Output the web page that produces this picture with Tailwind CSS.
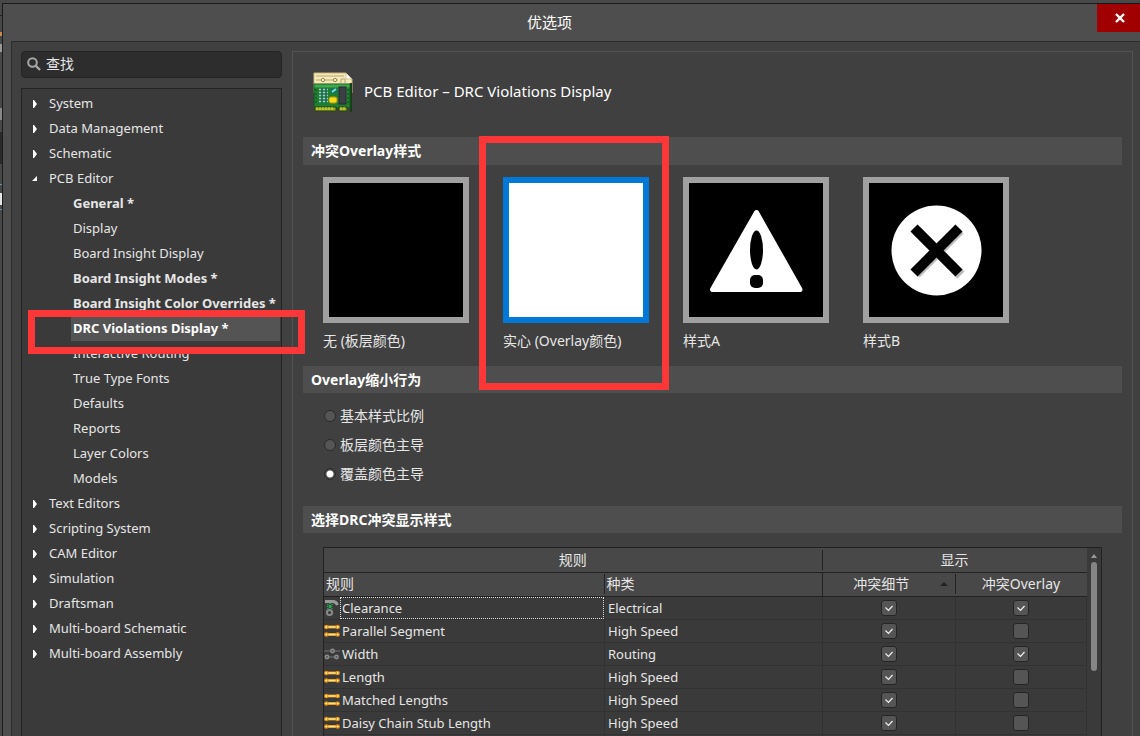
<!DOCTYPE html>
<html lang="zh-CN">
<head>
<meta charset="utf-8">
<meta name="viewport" content="width=device-width, initial-scale=1">
<title>优选项</title>
<script src="https://cdn.jsdelivr.net/npm/@tailwindcss/browser@4"></script>
</head>
<body class="flex h-screen flex-col overflow-hidden bg-[#484848] font-['Noto_Sans','Noto_Sans_CJK_SC',sans-serif] text-[13px] text-[#e6e6e6]">
<svg class="hidden" aria-hidden="true">
  <symbol id="arrow" viewBox="0 0 4 8"><path d="M0 0h1l3 4-3 4H0z" fill="#fff"/></symbol>
  <symbol id="tick" viewBox="0 0 16 16"><path d="M4.500 7.500l3 3 4-4.500" fill="none" stroke="#f0f0f0" stroke-width="1.200"/></symbol>
  <symbol id="segments" viewBox="0 0 16 14">
    <path d="M2.500 3h11M2.500 10.500h11" stroke="#e08a10" stroke-width="2.800"/>
    <path d="M2.500 3h11M2.500 10.500h11" stroke="#ffe98a" stroke-width="1.300"/>
    <g fill="#fff89a" stroke="#e88a10" stroke-width="1.200"><circle cx="2.300" cy="3" r="1.600"/><circle cx="13.700" cy="3" r="1.600"/><circle cx="2.300" cy="10.500" r="1.600"/><circle cx="13.700" cy="10.500" r="1.600"/></g>
  </symbol>
</svg>
<div class="h-[3px] shrink-0"></div>
<div class="flex min-h-0 flex-1">
  <div class="flex w-[2px] shrink-0 flex-col" aria-hidden="true">
    <div class="mt-3 h-px bg-[#222]"></div><div class="mt-4 h-1 bg-[#c88a50]"></div><div class="mt-2 h-2 bg-[#999]"></div><div class="mt-14 h-3 bg-[#888]"></div><div class="mt-3 h-8 bg-[#2a2a2a]"></div><div class="mt-5 h-px bg-[#6a93b8]"></div><div class="mt-2 h-3 bg-[#e6e6e6]"></div><div class="mt-1 h-px bg-[#6a93b8]"></div>
  </div>
  <main class="flex min-w-0 flex-1 flex-col border-t border-l border-[#1b1b1b] bg-[#4e4e4e]">
    <header class="relative flex h-[37px] shrink-0 items-center justify-center">
      <h1 class="pr-11 text-[15px] text-white">优选项</h1>
      <button aria-label="关闭" class="absolute top-0 right-0 flex h-7 w-[43px] items-center justify-center bg-[#a00000] pl-[2px]">
        <svg class="size-[10px]" viewBox="0 0 10 10"><path d="M1 1l8 8M9 1l-8 8" stroke="#fff" stroke-width="2.400"/></svg>
      </button>
    </header>
    <div class="ml-2 flex min-h-0 flex-1 gap-[10px] border-t border-l border-[#2d2d2d] bg-[#404040] pt-[9px] pr-[7px] pl-[9px]">
      <aside class="flex w-[261px] shrink-0 flex-col gap-[10px]">
        <label class="flex h-[27px] shrink-0 items-center gap-[5px] rounded border border-[#242424] bg-[#2d2d2d] px-[5px] pb-[2px]">
          <svg class="size-[14px] shrink-0" viewBox="0 0 14 14"><circle cx="5.500" cy="5.500" r="4.300" fill="none" stroke="#a6a6a6" stroke-width="2"/><path d="M8.500 8.500l4.500 4.500" stroke="#a6a6a6" stroke-width="2.400"/></svg>
          <input type="text" placeholder="查找" aria-label="查找" class="min-w-0 flex-1 bg-transparent text-sm outline-none placeholder:text-[#e6e6e6]">
        </label>
        <nav class="min-h-0 flex-1 border border-b-0 border-[#242424] bg-[#3a3a3a] pt-[2px] [&_a]:block [&_a]:h-[25px] [&_a]:leading-[25px] [&_a]:whitespace-nowrap">
          <ul class="[&>li>div]:flex [&>li>div]:items-center [&>li>div]:gap-3 [&>li>div]:pl-[11px]">
            <li><div><svg class="h-2 w-1"><use href="#arrow"/></svg><a href="#">System</a></div></li>
            <li><div><svg class="h-2 w-1"><use href="#arrow"/></svg><a href="#">Data Management</a></div></li>
            <li><div><svg class="h-2 w-1"><use href="#arrow"/></svg><a href="#">Schematic</a></div></li>
            <li><div><svg class="-ml-px h-[5px] w-[5px]" viewBox="0 0 5 5"><path d="M5 0v5H0z" fill="#fff"/></svg><a href="#">PCB Editor</a></div>
              <ul class="pl-[49px] [&_a]:pl-[2px]">
                <li class="font-bold"><a href="#">General *</a></li>
                <li><a href="#">Display</a></li>
                <li><a href="#">Board Insight Display</a></li>
                <li class="font-bold"><a href="#">Board Insight Modes *</a></li>
                <li class="mr-[2px] overflow-hidden font-bold"><a href="#">Board Insight Color Overrides *</a></li>
                <li class="relative font-bold text-white"><a href="#" aria-current="page" class="mr-px bg-[#545454]">DRC Violations Display *</a>
                  <div class="pointer-events-none absolute -top-[6px] -left-[43px] z-10 h-11 w-[277px] border-[7px] border-[#fd3737]"></div></li>
                <li><a href="#">Interactive Routing</a></li>
                <li><a href="#">True Type Fonts</a></li>
                <li><a href="#">Defaults</a></li>
                <li><a href="#">Reports</a></li>
                <li><a href="#">Layer Colors</a></li>
                <li><a href="#">Models</a></li>
              </ul></li>
            <li><div><svg class="h-2 w-1"><use href="#arrow"/></svg><a href="#">Text Editors</a></div></li>
            <li><div><svg class="h-2 w-1"><use href="#arrow"/></svg><a href="#">Scripting System</a></div></li>
            <li><div><svg class="h-2 w-1"><use href="#arrow"/></svg><a href="#">CAM Editor</a></div></li>
            <li><div><svg class="h-2 w-1"><use href="#arrow"/></svg><a href="#">Simulation</a></div></li>
            <li><div><svg class="h-2 w-1"><use href="#arrow"/></svg><a href="#">Draftsman</a></div></li>
            <li><div><svg class="h-2 w-1"><use href="#arrow"/></svg><a href="#">Multi-board Schematic</a></div></li>
            <li><div><svg class="h-2 w-1"><use href="#arrow"/></svg><a href="#">Multi-board Assembly</a></div></li>
          </ul>
        </nav>
      </aside>
      <section class="min-w-0 flex-1 overflow-hidden border border-b-0 border-[#535353] px-[10px]">
        <div class="flex h-[85px] items-center gap-[10px] pb-[6px] pl-[9px]">
          <svg class="size-[42px]" viewBox="0 0 42 42">
            <path d="M2 2h32l6 6v14H2z" fill="#f6e9b5" stroke="#c9b67c"/>
            <path d="M34 2v6h6z" fill="#fff" stroke="#b5a36c" stroke-width=".6"/>
            <path d="M4 5h28M4 9h5M13 9h9M29 12V8h4v4M24 9h2" fill="none" stroke="#b5a578"/>
            <circle cx="11" cy="9" r="1.700" fill="none" stroke="#9d8c61"/><circle cx="23" cy="9" r="1.700" fill="none" stroke="#9d8c61"/>
            <path d="M38 12h2v29h-2z" fill="#173d12"/>
            <path d="M2 13h36v24H2z" fill="#1f7e31" stroke="#155321"/>
            <path d="M2.500 13.500h35v3h-35z" fill="#41a84c"/>
            <path d="M3 36h21v4H3zM27 36h8v4h-8z" fill="#9aab20" stroke="#26430e"/>
            <path d="M5 36v3M8 36v3M11 36v3M14 36v3M17 36v3M20 36v3M29 36v3M32 36v3" stroke="#d4d94b"/>
            <path d="M4 18v14M36 18v14" stroke="#104e22" stroke-dasharray="2 2"/>
            <path d="M7 18.500h9M7 21.500h9M7 24.500h9M7 27.500h9M7 30.500h9" stroke="#a3cfc4" stroke-width="1.300"/>
            <path d="M10 17v15M14 17v15" stroke="#0c6058" stroke-width="1.500"/>
            <path d="M19 17h6v5h-6z" fill="#087766"/><path d="M20 21l4-3" stroke="#86dfcc" stroke-width="2"/>
            <rect x="17" y="26" width="8" height="6" rx="2" fill="#f4dc19" stroke="#b59a08"/>
            <path d="M26 18h9M26 21h9M26 24h9M26 27h9M26 30h9" stroke="#75a373"/>
            <rect x="27" y="16" width="7" height="17" fill="#3b4046" stroke="#262a2d"/>
          </svg>
          <h2 class="text-[15px] text-white">PCB Editor – DRC Violations Display</h2>
        </div>
        <div class="relative">
          <h3 class="flex h-7 items-center bg-[#4e4e4e] px-2 text-sm font-bold text-white">冲突Overlay样式</h3>
          <div class="flex gap-[34px] pt-3 pl-5 text-sm leading-5 [&>button]:flex [&>button]:w-[146px] [&>button]:flex-col [&>button]:items-start [&>button]:gap-2 [&>button]:whitespace-nowrap">
            <button><span class="block size-[146px] border-[6px] border-[#a0a0a0] bg-black"></span>无 (板层颜色)</button>
            <button aria-pressed="true"><span class="block size-[146px] border-[6px] border-[#0078d7] bg-white"></span>实心 (Overlay颜色)</button>
            <button><svg class="size-[146px] border-[6px] border-[#a0a0a0] bg-black" viewBox="0 0 134 134">
              <path d="M67.500 29.500L23.500 106.500h87.500z" fill="#fff" stroke="#fff" stroke-width="5" stroke-linejoin="round"/>
              <ellipse cx="67.500" cy="67" rx="6.500" ry="19.500"/><rect x="61" y="92" width="13" height="13" rx="5"/></svg>样式A</button>
            <button><svg class="size-[146px] border-[6px] border-[#a0a0a0] bg-black" viewBox="0 0 134 134">
              <circle cx="67.500" cy="67.500" r="45" fill="#fff"/>
              <path d="M47 47l45 45M91 47L47 91" stroke="#bbb" stroke-width="10"/>
              <path d="M45 45l45 45M90 45L45 90" stroke="#000" stroke-width="10"/></svg>样式B</button>
          </div>
          <div class="pointer-events-none absolute -top-px left-[176px] z-10 h-[254px] w-[190px] border-[7px] border-[#fd3737]"></div>
        </div>
        <h3 class="mt-[15px] flex h-[27px] items-center bg-[#4e4e4e] px-2 pt-px text-sm font-bold text-white">Overlay缩小行为</h3>
        <div class="flex flex-col gap-2 pt-3 pb-[22px] pl-[21px] text-sm leading-5 [&_input]:m-0 [&_input]:size-3 [&_input]:appearance-none [&_input]:rounded-full [&_input]:border [&_input]:border-[#2a2a2a] [&_input]:bg-[#555] [&_input]:checked:bg-[radial-gradient(circle,#fff_0_3px,#4a4a4a_4px)] [&_label]:flex [&_label]:h-[21px] [&_label]:items-center [&_label]:gap-1">
          <label><input type="radio" name="zoom">基本样式比例</label>
          <label><input type="radio" name="zoom">板层颜色主导</label>
          <label><input type="radio" name="zoom" checked>覆盖颜色主导</label>
        </div>
        <h3 class="flex h-[27px] items-center bg-[#4e4e4e] px-2 pt-px text-sm font-bold text-white">选择DRC冲突显示样式</h3>
        <div class="mt-[14px] mr-5 ml-5 flex border border-b-0 border-[#222] bg-[#3a3a3a]">
          <table class="w-full min-w-0 flex-1 table-fixed border-collapse [&_td]:h-[23px] [&_td]:border-r [&_td]:border-b [&_td]:border-[#323232] [&_td]:p-0 [&_td]:leading-5 [&_td]:whitespace-nowrap [&_td:nth-child(2)]:pt-px [&_td:nth-child(2)]:pl-[3px] [&_th]:h-6 [&_th]:border-b [&_th]:border-[#222] [&_th]:bg-[#484848] [&_th]:p-0 [&_th]:text-sm [&_th]:leading-5 [&_th]:font-normal [&_td>div]:flex [&_td>div]:items-center [&_td_label]:mx-auto [&_td_label]:grid [&_td_label]:size-4 [&_td_label>*]:col-start-1 [&_td_label>*]:row-start-1 [&_td_label>*]:size-4 [&_td_input]:appearance-none [&_td_input]:rounded-[3px] [&_td_input]:border [&_td_input]:border-[#252525] [&_td_input]:bg-[#555] [&_td_svg]:pointer-events-none [&_input:not(:checked)+svg]:hidden">
            <colgroup><col><col class="w-[218px]"><col class="w-[133px]"><col class="w-[131px]"></colgroup>
            <thead>
              <tr><th colspan="2"><div class="border-r border-[#222]">规则</div></th><th colspan="2">显示</th></tr>
              <tr><th><div class="border-r border-[#222] pl-[2px] text-left">规则</div></th><th class="border-r"><div class="pl-[2px] text-left">种类</div></th>
                <th><div class="flex items-center border-r border-[#222]"><span class="flex-1 text-center">冲突细节</span><svg class="mr-[7px] h-1 w-2 shrink-0" viewBox="0 0 8 4"><path d="M0 4l4-4 4 4z" fill="#222"/></svg></div></th><th>冲突Overlay</th></tr>
            </thead>
            <tbody>
              <tr><td><div><svg class="h-[18px] w-4" viewBox="0 0 16 18"><path d="M1 2.500h8q3 0 4.500 3.500" fill="none" stroke="#999" stroke-width="3"/><path d="M3.500 5l5 5M8.500 5l-5 5M6 4v6M3 7.500h6" stroke="#1fb551" stroke-width="1.200" stroke-dasharray="1.200 .8"/><circle cx="5.500" cy="13.500" r="2.600" fill="none" stroke="#888" stroke-width="2"/></svg><span class="h-[22px] flex-1 border border-dotted border-[#ddd] pl-px leading-5">Clearance</span></div></td><td>Electrical</td><td><label><input type="checkbox" checked aria-label="Clearance 冲突细节"><svg><use href="#tick"/></svg></label></td><td><label><input type="checkbox" checked aria-label="Clearance 冲突Overlay"><svg><use href="#tick"/></svg></label></td></tr>
              <tr><td><div><svg class="h-[14px] w-4"><use href="#segments"/></svg><span class="pt-px pl-[2px]">Parallel Segment</span></div></td><td>High Speed</td><td><label><input type="checkbox" checked aria-label="Parallel Segment 冲突细节"><svg><use href="#tick"/></svg></label></td><td><label><input type="checkbox" aria-label="Parallel Segment 冲突Overlay"><svg><use href="#tick"/></svg></label></td></tr>
              <tr><td><div><svg class="h-[14px] w-4" viewBox="0 0 16 14"><path d="M0 4h16M4 10h9" stroke="#747474" stroke-width="1.200"/><g fill="#555" stroke="#8c8c8c" stroke-width="1.500"><circle cx="8.500" cy="4" r="1.700"/><circle cx="3" cy="10" r="1.700"/><circle cx="12.500" cy="10" r="1.700"/></g></svg><span class="pt-px pl-[2px]">Width</span></div></td><td>Routing</td><td><label><input type="checkbox" checked aria-label="Width 冲突细节"><svg><use href="#tick"/></svg></label></td><td><label><input type="checkbox" checked aria-label="Width 冲突Overlay"><svg><use href="#tick"/></svg></label></td></tr>
              <tr><td><div><svg class="h-[14px] w-4"><use href="#segments"/></svg><span class="pt-px pl-[2px]">Length</span></div></td><td>High Speed</td><td><label><input type="checkbox" checked aria-label="Length 冲突细节"><svg><use href="#tick"/></svg></label></td><td><label><input type="checkbox" aria-label="Length 冲突Overlay"><svg><use href="#tick"/></svg></label></td></tr>
              <tr><td><div><svg class="h-[14px] w-4"><use href="#segments"/></svg><span class="pt-px pl-[2px]">Matched Lengths</span></div></td><td>High Speed</td><td><label><input type="checkbox" checked aria-label="Matched Lengths 冲突细节"><svg><use href="#tick"/></svg></label></td><td><label><input type="checkbox" aria-label="Matched Lengths 冲突Overlay"><svg><use href="#tick"/></svg></label></td></tr>
              <tr><td><div><svg class="h-[14px] w-4"><use href="#segments"/></svg><span class="pt-px pl-[2px]">Daisy Chain Stub Length</span></div></td><td>High Speed</td><td><label><input type="checkbox" checked aria-label="Daisy Chain Stub Length 冲突细节"><svg><use href="#tick"/></svg></label></td><td><label><input type="checkbox" aria-label="Daisy Chain Stub Length 冲突Overlay"><svg><use href="#tick"/></svg></label></td></tr>
              <tr><td></td><td></td><td></td><td></td></tr>
            </tbody>
          </table>
          <div class="flex w-[14px] shrink-0 flex-col items-center gap-1 pt-[6px]">
            <svg class="h-1 w-[6px]" viewBox="0 0 6 4"><path d="M0 4l3-4 3 4z" fill="#999"/></svg>
            <div class="h-[109px] w-[6px] rounded-full bg-[#858585]"></div>
          </div>
        </div>
      </section>
    </div>
  </main>
</div>
</body>
</html>
